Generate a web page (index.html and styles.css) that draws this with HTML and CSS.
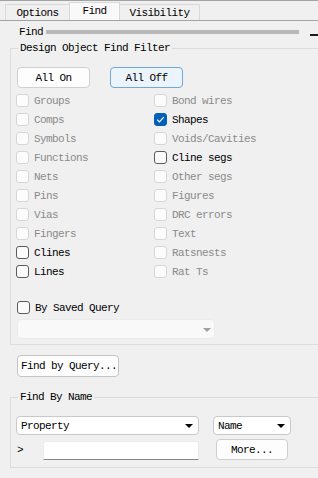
FILE: index.html
```html
<!DOCTYPE html>
<html lang="en">
<head>
    <meta charset="UTF-8">
    <title>Find</title>
    <link rel="stylesheet" href="styles.css">
</head>
<body>
<div class="tabs">
    <div class="tab tab-options">Options</div>
    <div class="tab tab-find active">Find</div>
    <div class="tab tab-vis">Visibility</div>
</div>
<div class="title-row">
    <span class="title">Find</span>
    <span class="title-bar"></span>
    <span class="title-dash"></span>
</div>
<fieldset class="group filter">
    <legend>Design Object Find Filter</legend>
    <div class="btn-row">
        <button class="btn btn-all">All On</button>
        <button class="btn btn-all focus">All Off</button>
    </div>
    <div class="check-grid">
        <label class="check disabled"><span class="box"></span>Groups</label>
        <label class="check disabled"><span class="box"></span>Bond wires</label>
        <label class="check disabled"><span class="box"></span>Comps</label>
        <label class="check checked"><span class="box"><svg width="13" height="13" viewBox="0 0 13 13"><path d="M3.2 6.6 L5.4 8.8 L9.8 4.2" fill="none" stroke="#fff" stroke-width="1.2"/></svg></span>Shapes</label>
        <label class="check disabled"><span class="box"></span>Symbols</label>
        <label class="check disabled"><span class="box"></span>Voids/Cavities</label>
        <label class="check disabled"><span class="box"></span>Functions</label>
        <label class="check"><span class="box"></span>Cline segs</label>
        <label class="check disabled"><span class="box"></span>Nets</label>
        <label class="check disabled"><span class="box"></span>Other segs</label>
        <label class="check disabled"><span class="box"></span>Pins</label>
        <label class="check disabled"><span class="box"></span>Figures</label>
        <label class="check disabled"><span class="box"></span>Vias</label>
        <label class="check disabled"><span class="box"></span>DRC errors</label>
        <label class="check disabled"><span class="box"></span>Fingers</label>
        <label class="check disabled"><span class="box"></span>Text</label>
        <label class="check"><span class="box"></span>Clines</label>
        <label class="check disabled"><span class="box"></span>Ratsnests</label>
        <label class="check"><span class="box"></span>Lines</label>
        <label class="check disabled"><span class="box"></span>Rat Ts</label>
    </div>
    <label class="check saved"><span class="box"></span>By Saved Query</label>
    <div class="combo combo-saved"><span class="arrow"></span></div>
</fieldset>
<button class="btn btn-query">Find by Query...</button>
<fieldset class="group byname">
    <legend>Find By Name</legend>
    <div class="name-row">
        <div class="combo combo-prop">Property<span class="arrow"></span></div>
        <div class="combo combo-name">Name<span class="arrow"></span></div>
    </div>
    <div class="name-row row2">
        <span class="prompt">&gt;</span>
        <div class="input"></div>
        <button class="btn btn-more">More...</button>
    </div>
</fieldset>
</body>
</html>
```

FILE: styles.css
```css
*{
    margin: 0;
    padding: 0;
    box-sizing: border-box;
}
body{
    width: 318px;
    height: 478px;
    overflow: hidden;
    background-color: #f0f0f0;
    font: 11px/12px "Liberation Mono", monospace;
    letter-spacing: -0.6px;
    color: #000;
}
/* tabs */
.tabs{
    display: flex;
    align-items: flex-end;
    height: 21px;
    border-top: 1px solid #a3a3a3;
    border-bottom: 1px solid #a3a3a3;
    padding-left: 5px;
}
.tab{
    height: 16px;
    padding-top: 1px;
    line-height: 15px;
    text-align: center;
    border: 1px solid #d9d9d9;
    border-bottom: none;
    background-color: #f0f0f0;
}
.tab + .tab{
    margin-left: -1px;
}
.tab-options{ width: 65px; }
.tab-find{ width: 51px; }
.tab-vis{ width: 81px; }
.tab.active{
    height: 18px;
    background-color: #f9f9f9;
    position: relative;
    z-index: 1;
}
/* title */
.title-row{
    display: flex;
    align-items: center;
    height: 21px;
    padding-left: 19px;
}
.title{
    padding-top: 1px;
}
.title-bar{
    width: 253px;
    height: 4px;
    margin-left: 3px;
    margin-top: 1px;
    background-color: #b9b9b9;
}
.title-dash{
    width: 8px;
    height: 2px;
    margin-left: 11px;
    margin-top: 7px;
    background-color: #1a1a1a;
}
/* group boxes */
.group{
    margin-left: 10px;
    border: 1px solid #dcdcdc;
    border-right: none;
    padding: 13px 0 5px 5px;
}
.group legend{
    margin-left: 2px;
    padding: 0 2px;
    line-height: 12px;
}
.btn{
    display: block;
    font: inherit;
    letter-spacing: inherit;
    color: #000;
    background-color: #fdfdfd;
    border: 1px solid #d0d0d0;
    border-radius: 4px;
}
.btn-row{
    display: flex;
    gap: 20px;
    padding-left: 1px;
}
.btn-all{
    width: 73px;
    height: 21px;
}
.btn.focus{
    background-color: #ebf3fb;
    border-color: #72a7d8;
}
.check-grid{
    display: grid;
    grid-template-columns: 138px 1fr;
    grid-auto-rows: 19px;
    margin-top: 3px;
}
.check{
    display: flex;
    align-items: center;
    gap: 5px;
    height: 19px;
}
.box{
    width: 13px;
    height: 13px;
    border: 1px solid #5b5b5b;
    border-radius: 3px;
    background-color: #fbfbfb;
}
.box svg{
    display: block;
    margin: -1px;
}
.check.disabled{
    color: #8b8b8b;
}
.check.disabled .box{
    border-color: #d6d6d6;
    background-color: #fcfcfc;
}
.check.checked .box{
    border-color: #005fb8;
    background-color: #005fb8;
}
.check.saved{
    margin-top: 17px;
    padding-left: 1px;
}
.combo{
    position: relative;
    display: flex;
    align-items: center;
    height: 19px;
    padding-left: 4px;
    background-color: #fff;
    border: 1px solid #c9c9c9;
    border-radius: 4px;
}
.combo .arrow{
    position: absolute;
    right: 5px;
    top: 7px;
    width: 0;
    height: 0;
    border-left: 4px solid transparent;
    border-right: 4px solid transparent;
    border-top: 4px solid #000;
}
.combo-saved{
    width: 198px;
    height: 20px;
    margin: 2px 0 0 1px;
    background-color: #f9f9f9;
    border-color: #ececec;
}
.combo-saved .arrow{
    right: 3px;
    top: 8px;
    border-top: 4px solid #a0a0a0;
}
.btn-query{
    width: 102px;
    height: 22px;
    margin: 10px 0 0 17px;
    text-align: left;
    padding-left: 3px;
    border-color: #c4c4c4;
}
.byname{
    margin-top: 14px;
    padding-bottom: 7px;
}
.name-row{
    display: flex;
    align-items: center;
}
.combo-prop{
    width: 183px;
}
.combo-name{
    width: 78px;
    margin-left: 14px;
}
.row2{
    margin-top: 4px;
    height: 21px;
}
.prompt{
    width: 27px;
    padding-left: 1px;
}
.input{
    width: 156px;
    height: 19px;
    margin-top: 1px;
    background-color: #fff;
    border: 1px solid #ececec;
    border-bottom-color: #868686;
    border-radius: 3px 3px 0 0;
}
.btn-more{
    width: 72px;
    height: 21px;
    margin-left: 17px;
    border-color: #cfcfcf;
}
```
